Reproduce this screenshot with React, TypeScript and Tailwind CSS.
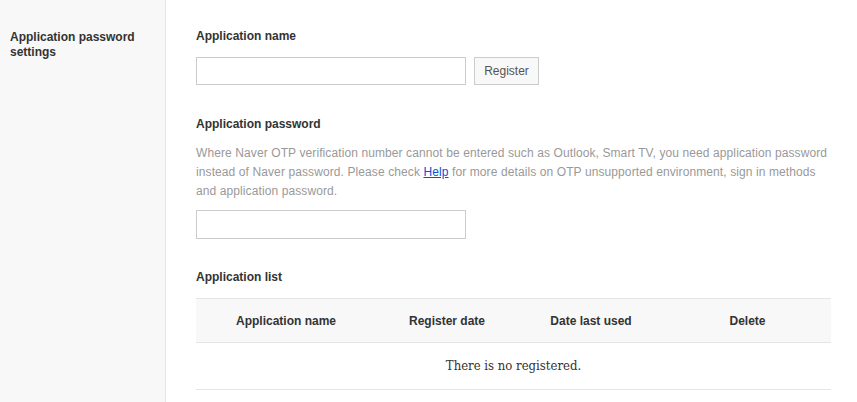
export default function App() {
    return (
        <div
            className="flex h-[402px] w-full bg-white text-[#333]"
            style={{ fontFamily: '"Liberation Sans", Arial, sans-serif' }}
        >
            {/* Sidebar */}
            <div className="w-[166px] shrink-0 border-r border-[#e5e5e5] bg-[#f8f8f8] px-[10px] pt-[30px]">
                <h2 className="text-[12px] font-bold leading-[15px] text-[#333]">
                    Application password settings
                </h2>
            </div>

            {/* Content */}
            <div className="flex-1 pl-[30px] pr-[26px] pt-[28px]">
                <h3 className="text-[12px] font-bold leading-[16px]">Application name</h3>
                <div className="mt-[13px] flex gap-[8px]">
                    <input
                        type="text"
                        className="h-[28px] w-[270px] border border-[#ccc] bg-white px-2 text-[12px] outline-none"
                    />
                    <button className="h-[28px] w-[65px] border border-[#ccc] bg-[#f8f8f8] text-[12px] text-[#555]">
                        Register
                    </button>
                </div>

                <h3 className="mt-[31px] text-[12px] font-bold leading-[16px]">Application password</h3>
                <p className="mt-[12px] w-[635px] text-[12px] leading-[19px] tracking-[0.1px] text-[#999]">
                    Where Naver OTP verification number cannot be entered such as Outlook, Smart TV, you need application password
                    instead of Naver password. Please check{' '}
                    <a href="#" className="text-[#0b4fd6] underline">
                        Help
                    </a>{' '}
                    for more details on OTP unsupported environment, sign in methods and application password.
                </p>
                <input
                    type="password"
                    className="mt-[9px] block h-[29px] w-[270px] border border-[#ccc] bg-white px-2 text-[12px] outline-none"
                />

                <h3 className="mt-[30px] text-[12px] font-bold leading-[16px]">Application list</h3>
                <table className="mt-[13px] w-[635px] table-fixed border-collapse">
                    <thead>
                        <tr className="h-[44px] border-y border-[#e5e5e5] bg-[#f8f8f8] text-[12px] font-bold">
                            <th className="w-[180px] font-bold">Application name</th>
                            <th className="w-[142px] font-bold">Register date</th>
                            <th className="w-[146px] font-bold">Date last used</th>
                            <th className="font-bold">Delete</th>
                        </tr>
                    </thead>
                    <tbody>
                        <tr className="h-[47px] border-b border-[#e5e5e5]">
                            <td
                                colSpan={4}
                                className="text-center text-[13px] text-[#333]"
                                style={{ fontFamily: '"DejaVu Serif Condensed", "DejaVu Serif", serif' }}
                            >
                                There is no registered.
                            </td>
                        </tr>
                    </tbody>
                </table>
            </div>
        </div>
    );
}
